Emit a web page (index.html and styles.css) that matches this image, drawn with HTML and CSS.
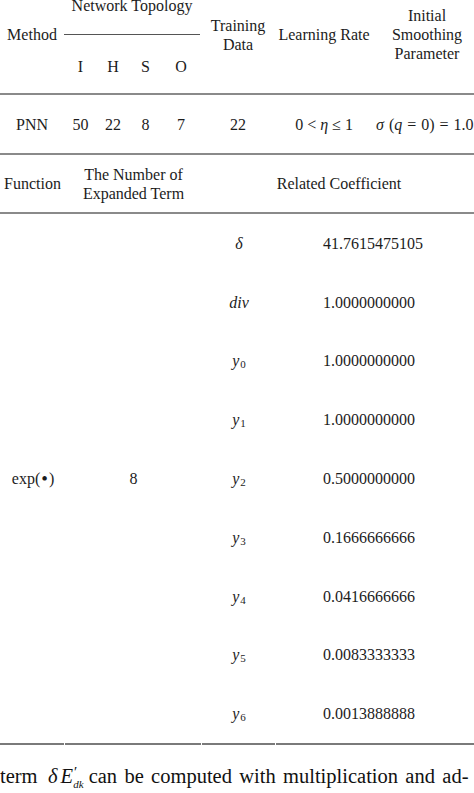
FILE: index.html
```html
<!DOCTYPE html>
<html>
<head>
<meta charset="utf-8">
<link rel="stylesheet" href="styles.css">
</head>
<body>
<div class="page">
  <div class="hdr1">
    <div class="c method">Method</div>
    <div class="c topo">Network Topology</div>
    <div class="c sub">I</div>
    <div class="c sub">H</div>
    <div class="c sub">S</div>
    <div class="c sub">O</div>
    <div class="c training">Training<br>Data</div>
    <div class="c lrate">Learning Rate</div>
    <div class="c init">Initial<br>Smoothing<br>Parameter</div>
  </div>
  <div class="rule"></div>
  <div class="row1">
    <div class="c">PNN</div>
    <div class="c">50</div>
    <div class="c">22</div>
    <div class="c">8</div>
    <div class="c">7</div>
    <div class="c">22</div>
    <div class="c">0<span class="op">&lt;</span><i>η</i><span class="op">≤</span>1</div>
    <div class="c sigma"><i>σ</i><span class="gap"></span>(<i>q</i><span class="op op2">=</span>0)<span class="op op2">=</span>1.0</div>
  </div>
  <div class="rule"></div>
  <div class="hdr2">
    <div class="c">Function</div>
    <div class="c">The Number of<br>Expanded Term</div>
    <div class="c related">Related Coefficient</div>
  </div>
  <div class="rule"></div>
  <div class="body">
    <div class="c func">exp(<span class="dot">•</span>)</div>
    <div class="c num">8</div>
    <div class="c sym"><i>δ</i></div><div class="c val">41.7615475105</div>
    <div class="c sym"><i>div</i></div><div class="c val">1.0000000000</div>
    <div class="c sym"><i>y</i><span class="sb">0</span></div><div class="c val">1.0000000000</div>
    <div class="c sym"><i>y</i><span class="sb">1</span></div><div class="c val">1.0000000000</div>
    <div class="c sym"><i>y</i><span class="sb">2</span></div><div class="c val">0.5000000000</div>
    <div class="c sym"><i>y</i><span class="sb">3</span></div><div class="c val">0.1666666666</div>
    <div class="c sym"><i>y</i><span class="sb">4</span></div><div class="c val">0.0416666666</div>
    <div class="c sym"><i>y</i><span class="sb">5</span></div><div class="c val">0.0083333333</div>
    <div class="c sym"><i>y</i><span class="sb">6</span></div><div class="c val">0.0013888888</div>
  </div>
  <div class="rule-broken">
    <span class="seg s1"></span><span class="seg s2"></span><span class="seg s3"></span><span class="seg s4"></span>
  </div>
  <p class="prose">term <i class="dl">δ</i><i class="em">E</i><span class="pr">′</span><span class="dk">dk</span><span class="gap2"></span>can be computed with multiplication and ad-</p>
</div>
</body>
</html>
```
FILE: styles.css
```css
html, body {
  margin: 0;
  padding: 0;
  background: #ffffff;
  overflow: hidden;
}
body {
  width: 474px;
  height: 793px;
  font-family: "Liberation Serif", "Times New Roman", serif;
  font-size: 16px;
  line-height: 19px;
  color: #1c1c1c;
}
.page {
  margin-top: -24px;
  width: 482px;
}
.c {
  display: flex;
  align-items: center;
  justify-content: center;
  text-align: center;
  white-space: nowrap;
}
.hdr1 {
  display: grid;
  grid-template-columns: 64px 33px 32px 33px 38px 76px 96px 110px;
  grid-template-rows: 59px 58px;
}
.method { grid-column: 1; grid-row: 1 / 3; }
.topo {
  grid-column: 2 / 6;
  grid-row: 1;
  border-bottom: 1px solid #555555;
  align-items: flex-start;
  padding-top: 20px;
}
.sub { grid-row: 2; padding-top: 5px; }
.training { grid-column: 6; grid-row: 1 / 3; }
.lrate { grid-column: 7; grid-row: 1 / 3; }
.init { grid-column: 8; grid-row: 1 / 3; }

.rule {
  height: 2px;
  background: #8a8a8a;
}
.row1 {
  display: grid;
  grid-template-columns: 64px 33px 32px 33px 38px 76px 96px 110px;
  height: 58px;
}
.op { margin: 0 4px; }
.op2 { margin: 0 5px; }
.gap { display: inline-block; width: 5px; }
.sigma { justify-content: flex-start; padding-left: 4px; }
.hdr2 {
  display: grid;
  grid-template-columns: 65px 137px 274px;
  height: 57px;
}
.body {
  display: grid;
  grid-template-columns: 65px 137px 74px 200px;
  grid-template-rows: repeat(9, 1fr);
  height: 529px;
}
.func { grid-column: 1; grid-row: 1 / 10; padding-left: 1px; }
.dot { font-size: 19px; margin: 0 1px; }
.num { grid-column: 2; grid-row: 1 / 10; }
.sym { grid-column: 3; }
.val { grid-column: 4; justify-content: flex-start; padding-left: 47px; }
.sym i { font-style: italic; }
.sb {
  font-size: 11px;
  position: relative;
  top: 4px;
  margin-left: 1px;
}
.rule-broken {
  display: flex;
  gap: 1px;
  height: 2px;
}
.seg { display: block; height: 2px; background: #7a7a7a; }
.s1 { width: 64px; }
.s2 { width: 136px; }
.s3 { width: 73px; }
.s4 { flex: 1; }
.prose {
  margin: 15px 0 0 0;
  font-size: 20.5px;
  line-height: 24px;
  white-space: nowrap;
  word-spacing: 2.2px;
  color: #111111;
}
.dl { margin-left: 3px; margin-right: 3px; }
.pr {
  font-size: 15px;
  vertical-align: 6px;
  margin-left: 1px;
}
.dk {
  font-size: 11px;
  font-style: italic;
  vertical-align: -5px;
  margin-left: -4px;
}
.gap2 { display: inline-block; width: 5px; }
```
